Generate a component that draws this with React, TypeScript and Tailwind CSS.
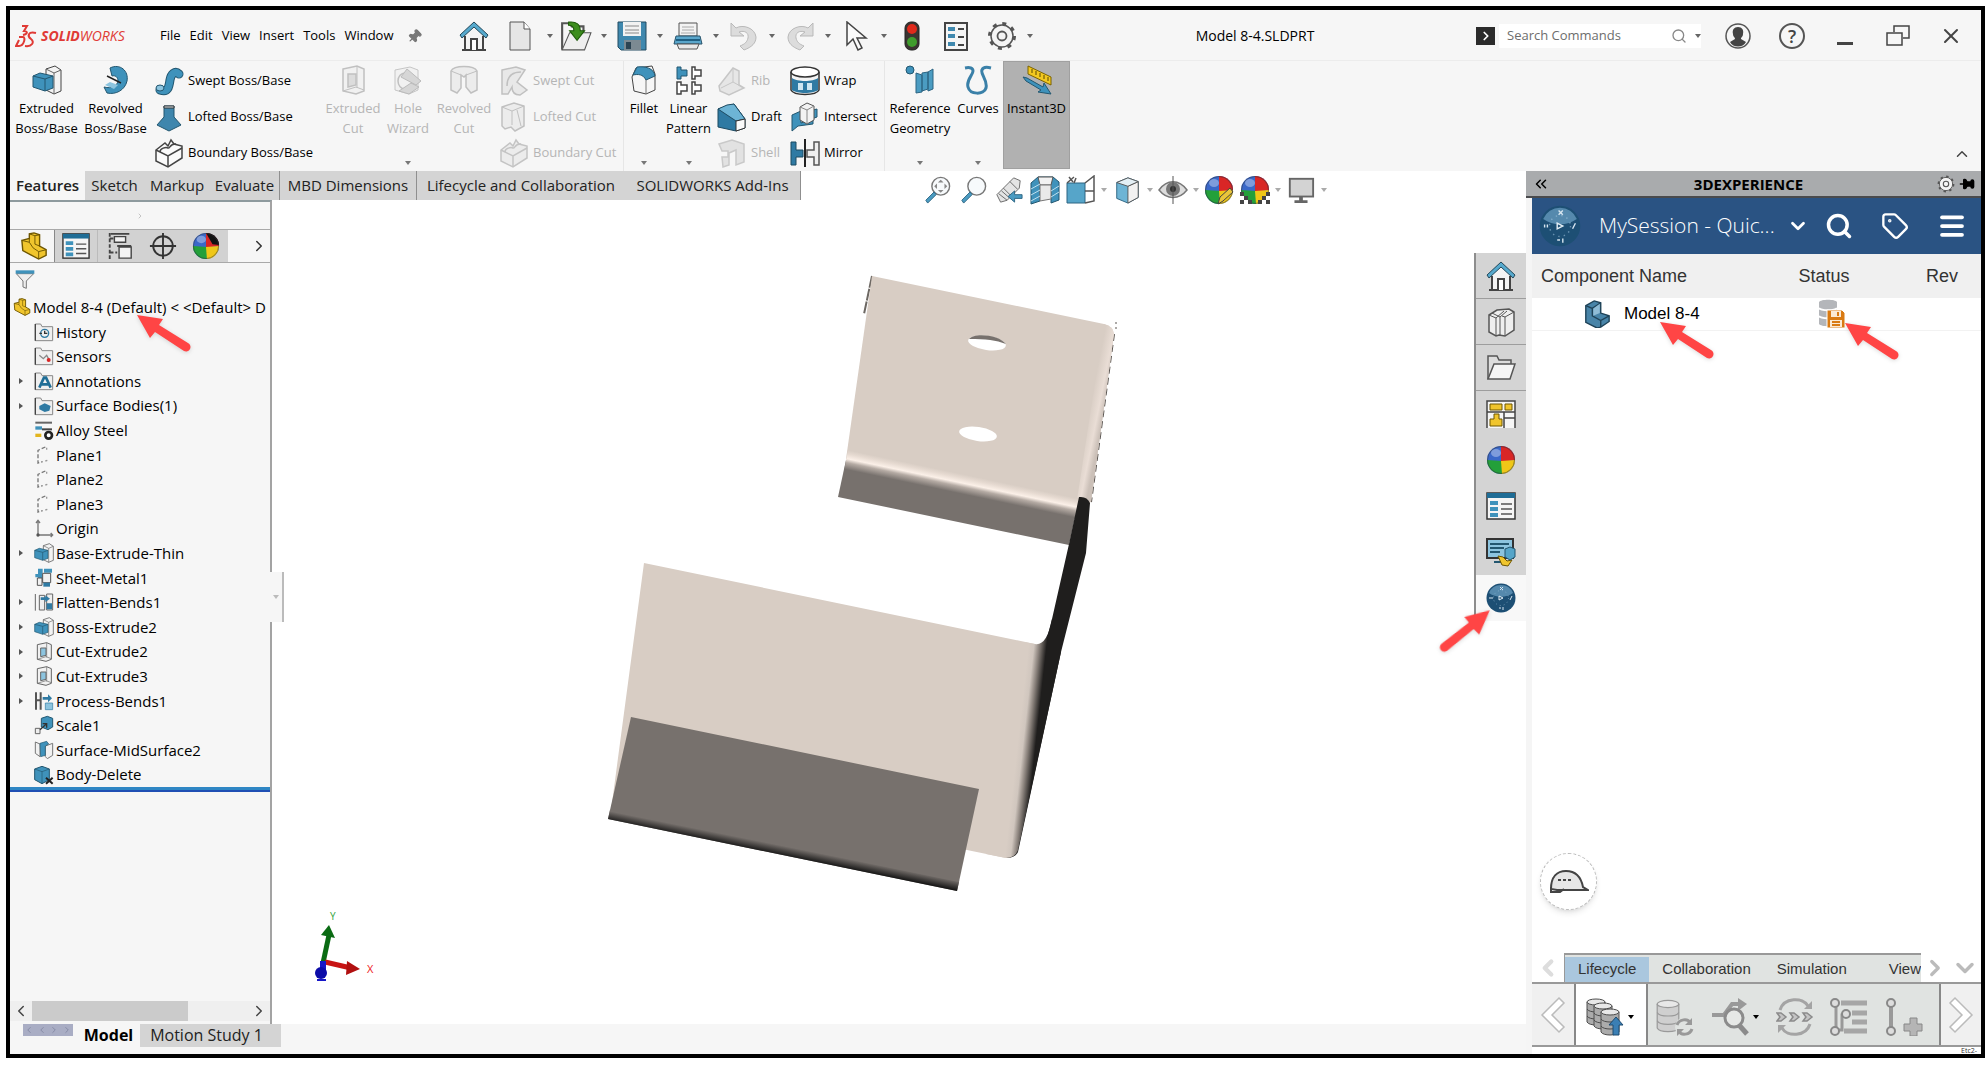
import { useState } from 'react'
import type { ReactNode } from 'react'
import { ChevronDown, ChevronLeft, ChevronRight, ChevronUp, ChevronsLeft, Menu, Pin, Search, Tag, X } from 'lucide-react'

type IcoProps = { size?: number; className?: string; children: ReactNode }

function Ico({ size = 30, className = '', children }: IcoProps) {
  return (
    <svg width={size} height={size} viewBox="0 0 30 30" fill="none" className={`shrink-0 ${className}`} aria-hidden="true">
      {children}
    </svg>
  )
}

const Caret = ({ className = 'text-[#666]' }: { className?: string }) => (
  <svg width="6" height="4" viewBox="0 0 6 4" className={`shrink-0 ${className}`} aria-hidden="true">
    <path d="M0 0h6L3 4z" fill="currentColor" />
  </svg>
)

/* ---------- title bar icons ---------- */

const HomeIcon = ({ size = 30 }: { size?: number }) => (
  <Ico size={size}>
    <path d="M5 14v15h20V14L15 5z" fill="#f4f4f4" />
    <path d="M6 15v14M24 15v14M3 29h24" stroke="#444" strokeWidth="2" />
    <path d="M15 1L1 14l2 3L15 6l12 11 2-3z" fill="#56a9cd" stroke="#23485a" />
    <path d="M12 29V18h6v11" fill="#fff" stroke="#444" strokeWidth="2" />
  </Ico>
)

const NewIcon = () => (
  <Ico>
    <path d="M5 1h14l6 7v21H5z" fill="#e6e6e6" stroke="#555" />
    <path d="M19 1v7h6" fill="#fff" stroke="#555" />
  </Ico>
)

const OpenIcon = () => (
  <Ico size={32}>
    <path d="M2 28V3h7l2 3h11v5" stroke="#555" strokeWidth="2" />
    <path d="M2 28L9 12h20l-6 16z" fill="#eee" stroke="#555" />
    <path d="M8 2c7-1 11 2 11 8h4l-7 9-7-9h4c0-3-2-5-5-5z" fill="#3c8d1d" stroke="#1f5c0c" />
  </Ico>
)

const SaveIcon = () => (
  <Ico>
    <path d="M1 1h28v28H4l-3-3z" fill="#3f88ae" stroke="#234a60" />
    <path d="M6 1h18v14H6z" fill="#f2f2f2" />
    <path d="M8 5h14M8 9h14M8 12h14" stroke="#888" />
    <path d="M7 19h17v10H7z" fill="#7c8a92" />
    <path d="M9 21h5v7H9z" fill="#2b4352" />
  </Ico>
)

const PrintIcon = () => (
  <Ico>
    <path d="M6 15V2h18v13z" fill="#f3f3f3" stroke="#555" />
    <path d="M9 6h12M9 9h12M8 12h14" stroke="#aaa" />
    <path d="M3 15h24l2 8H1z" fill="#5aa6cb" stroke="#28536a" />
    <path d="M3 19h24" stroke="#1f5f82" strokeWidth="2" />
    <path d="M4 23h22l-2 5H6z" fill="#e9e9e9" stroke="#555" />
  </Ico>
)

const UndoIcon = ({ flip = false }: { flip?: boolean }) => (
  <Ico>
    <g transform={flip ? 'matrix(-1 0 0 1 30 0)' : undefined}>
      <path d="M2 2v13h13l-5-4c6-2 10 1 9 6-1 4-3 6-8 8l4 4c8-3 12-7 12-13C26 7 14 3 7 7z" fill="#dcdcdc" stroke="#b9b9b9" />
    </g>
  </Ico>
)

const CursorIcon = () => (
  <Ico>
    <path d="M6 1v23l6-6 5 11 4-2-5-10h9z" fill="#fafafa" stroke="#444" strokeWidth="1.5" />
  </Ico>
)

const TrafficIcon = () => (
  <Ico>
    <rect x="8" y="1" width="14" height="28" rx="6" fill="#3a3431" stroke="#222" />
    <circle cx="15" cy="8" r="5" fill="#e0291b" />
    <circle cx="15" cy="21" r="5" fill="#3f9c2c" />
  </Ico>
)

const ListIcon = () => (
  <Ico>
    <rect x="4" y="2" width="22" height="27" fill="#f5f5f5" stroke="#444" strokeWidth="2" />
    <path d="M7 6h7v4H7zM7 13h7v4H7zM7 21h7v4H7z" fill="#3f88ae" />
    <path d="M17 8h6M17 16h6M17 24h6" stroke="#444" strokeWidth="2" />
  </Ico>
)

const GearIcon = ({ size = 30 }: { size?: number }) => (
  <Ico size={size}>
    <circle cx="15" cy="15" r="11" fill="#f4f4f4" stroke="#555" strokeWidth="1.5" />
    <circle cx="15" cy="15" r="12.5" stroke="#555" strokeWidth="3" strokeDasharray="4 5.8" />
    <circle cx="15" cy="15" r="9.5" fill="#f4f4f4" />
    <circle cx="15" cy="15" r="4.5" stroke="#555" strokeWidth="1.8" />
  </Ico>
)

/* ---------- ribbon icons ---------- */

const ExtrudeIcon = ({ size = 30 }: { size?: number }) => (
  <Ico size={size}>
    <path d="M14 4l9-3 6 4v21l-7 3-8-4z" fill="#f3f3f3" stroke="#444" />
    <path d="M22 8l7-3M22 8v21M14 4l8 4" stroke="#666" />
    <path d="M1 11l7-3 13 3v12l-8 3-12-4z" fill="#3f92bb" stroke="#235770" />
    <path d="M1 11l12 3 8-3M13 14v12" stroke="#235770" />
  </Ico>
)

const RevolveIcon = () => (
  <Ico>
    <path d="M9 3c10-5 19 3 17 13-2 9-11 14-20 12l-3-6c8 2 13-1 14-6 0-4-3-6-6-5z" fill="#3f92bb" stroke="#235770" />
    <path d="M4 20l5-3 8 3-4 4z" fill="#8cc4df" />
    <path d="M6 11l14 7" stroke="#222" strokeWidth="1.5" />
  </Ico>
)

const SweptIcon = () => (
  <Ico>
    <path d="M6 24c8 3 9-3 10-10 1-6 5-10 9-6" stroke="#235770" strokeWidth="9" strokeLinecap="round" />
    <path d="M6 24c8 3 9-3 10-10 1-6 5-10 9-6" stroke="#3f92bb" strokeWidth="7" strokeLinecap="round" />
    <ellipse cx="6" cy="22" rx="4" ry="3" fill="#8cc4df" stroke="#235770" />
  </Ico>
)

const LoftIcon = () => (
  <Ico>
    <path d="M10 4h10v11l7 8-12 6-12-6 7-8z" fill="#3f86ad" stroke="#235770" />
    <path d="M10 4h10v2H10z" fill="#dfe9ee" stroke="#333" />
  </Ico>
)

const BoundaryIcon = ({ muted = false }: { muted?: boolean }) => (
  <Ico>
    <g stroke={muted ? '#c4c4c4' : '#444'} strokeWidth="1.5" fill={muted ? '#ececec' : '#fafafa'}>
      <path d="M2 12l9-7 3 3 3-6 3 4 8 2v12l-14 9-12-6z" />
      <path d="M2 12l12 6 14-8M14 18v11M6 14c0-4 6-5 8-4s2-5 8-4" fill="none" />
    </g>
  </Ico>
)

const CutIcon = ({ size = 30, color = '#dcdcdc', stroke = '#c0c0c0' }: { size?: number; color?: string; stroke?: string }) => (
  <Ico size={size}>
    <path d="M5 4l14-3 7 3v22l-8 3-13-3z" fill="#f1f1f1" stroke={stroke} strokeWidth="1.5" />
    <path d="M19 1v22M5 26l13-4 8 3" stroke={stroke} />
    <path d="M10 9h8v11l-8 2z" fill={color} stroke={stroke} strokeWidth="1.5" />
  </Ico>
)

const HoleIcon = () => (
  <Ico>
    <path d="M2 5l15-3 8 3v20l-9 4-14-4z" fill="#f1f1f1" stroke="#c6c6c6" />
    <ellipse cx="12" cy="16" rx="7" ry="8" stroke="#c0c0c0" strokeWidth="1.5" />
    <path d="M8 12l6-8 14 12-5 4zM6 26l12-8 8 4-10 7z" fill="#d6d6d6" stroke="#bbb" />
  </Ico>
)

const RevCutIcon = () => (
  <Ico>
    <path d="M2 6c3-6 23-6 26 0v19l-6 3-5-6V10l-2 2-3-2v13l-4 5-6-3z" fill="#ececec" stroke="#c0c0c0" strokeWidth="1.5" />
    <path d="M2 6l10 4M28 6l-11 4" stroke="#c0c0c0" />
  </Ico>
)

const SweptCutIcon = () => (
  <Ico>
    <path d="M3 4l14-3 9 3-8 12 10 8-7 5c-6 0-8-4-8-8l-4 7H3z" fill="#e8e8e8" stroke="#c0c0c0" strokeWidth="1.5" />
    <path d="M8 20c0-9 5-14 14-14" stroke="#c0c0c0" strokeWidth="1.5" />
  </Ico>
)

const LoftCutIcon = () => (
  <Ico>
    <path d="M3 5l12-4 10 3v20l-9 5-4-4-6 2-3-3z" fill="#ececec" stroke="#c0c0c0" strokeWidth="1.5" />
    <path d="M3 5l10 4 12-5M13 9v14M18 8l4 16" stroke="#c0c0c0" />
  </Ico>
)

const FilletIcon = () => (
  <Ico>
    <path d="M3 12L7 3l16-2 3 8v16l-9 4-12-3z" fill="#f6f6f6" stroke="#444" />
    <path d="M4 10l4-8c8-1 17 1 18 9l-9 4C14 9 9 9 4 10z" fill="#3f92bb" stroke="#235770" />
    <path d="M17 15v14" stroke="#777" />
  </Ico>
)

const PatternIcon = () => (
  <Ico>
    <path d="M3 2h4v3h6v6H7v3H3z" fill="#3f92bb" stroke="#235770" />
    <g stroke="#444" strokeWidth="1.5" fill="#fff">
      <path d="M18 2h3v3h6v6h-6v3h-3z" />
      <path d="M3 17h4v3h6v6H7v3H3z" />
      <path d="M18 17h3v3h6v6h-6v3h-3z" />
    </g>
  </Ico>
)

const RibIcon = () => (
  <Ico>
    <path d="M2 20L16 2l6 3v14l5 3-15 7-9-4z" fill="#e6e6e6" stroke="#c6c6c6" strokeWidth="1.5" />
    <path d="M16 2v14L4 22M16 16l9 5" stroke="#c6c6c6" />
  </Ico>
)

const DraftIcon = () => (
  <Ico>
    <path d="M1 7l16-5 11 15v9l-9 3-18-4z" fill="#2f7aa3" stroke="#1d4a61" />
    <path d="M1 7l9-4 7-1 11 15-9 2z" fill="#6db4d5" stroke="#1d4a61" />
    <path d="M19 19l9-2v9l-9 3z" fill="#fafafa" stroke="#333" />
  </Ico>
)

const ShellIcon = () => (
  <Ico>
    <path d="M2 6l13-4 12 4v18l-8 3V12l-7 3v12l-6 2-1-10h6v-6H5z" fill="#e2e2e2" stroke="#c9c9c9" strokeWidth="1.5" />
  </Ico>
)

const WrapIcon = () => (
  <Ico>
    <path d="M1 6v18c3 6 25 6 28 0V6" fill="#f3f3f3" stroke="#333" strokeWidth="1.5" />
    <ellipse cx="15" cy="6" rx="14" ry="5" fill="#fff" stroke="#333" strokeWidth="1.5" />
    <path d="M2 12c5 4 21 4 26 0v12c-5 4-21 4-26 0z" fill="#2f7aa3" />
    <path d="M8 17h5v7H8zM17 17h5v7h-5z" fill="#cfe6f1" />
  </Ico>
)

const IntersectIcon = () => (
  <Ico>
    <path d="M2 13l9-4v12l16-6V7l-4 1v14L8 24l-6 5z" fill="#3f92bb" stroke="#235770" />
    <path d="M10 5l7-4 7 3v14l-7 4-7-4z" fill="#f3f3f3" stroke="#555" />
    <path d="M10 5l7 3 7-4M17 8v14" stroke="#888" />
  </Ico>
)

const MirrorIcon = () => (
  <Ico>
    <path d="M1 4h5v8h7v7H6v8H1z" fill="#2f7aa3" stroke="#1d4a61" />
    <path d="M15 1v28" stroke="#222" strokeWidth="2" />
    <path d="M29 4h-5v8h-7v7h7v8h5z" fill="#eee" stroke="#555" strokeWidth="1.5" />
  </Ico>
)

const RefGeoIcon = () => (
  <Ico>
    <circle cx="5" cy="5" r="4" fill="#3f92bb" stroke="#235770" />
    <path d="M11 8l6 2v17l-6 1zM17 8l6-1v17l-6 2zM23 7l5-3v20l-5 2z" fill="#4b9cc2" stroke="#2c6482" />
  </Ico>
)

const CurvesIcon = () => (
  <Ico>
    <path d="M2 3c5-1 8 0 8 3 0 4-7 9-5 16 2 8 16 8 18 1 2-8-6-14-4-18 1-3 5-3 9-2" stroke="#3a80a8" strokeWidth="3" />
  </Ico>
)

const InstantIcon = () => (
  <Ico>
    <path d="M6 1l23 11v8L6 9z" fill="#f3c81f" stroke="#7b6200" />
    <path d="M10 4v4M14 6v4M18 8v4M22 10v4M26 12v4" stroke="#5b4800" />
    <path d="M1 12l4 1 16 9 1-4 7 11-13-2 3-2-15-9z" fill="#3f92bb" stroke="#235770" />
  </Ico>
)

/* ---------- view toolbar icons ---------- */

const MagnifyIcon = ({ fit = false }: { fit?: boolean }) => (
  <Ico size={28}>
    <circle cx="19" cy="11" r="9.5" fill="#f7fafc" stroke="#777" strokeWidth="1.5" />
    <path d="M12 17l-9 9 2 3 9-9z" fill="#4b9cc2" stroke="#2c6482" />
    {fit && <path d="M19 4l3 3h-6zM19 18l3-3h-6zM12 11l3-3v6zM26 11l-3-3v6z" fill="#888" />}
  </Ico>
)

const PrevViewIcon = () => (
  <Ico size={28}>
    <path d="M2 20L20 2l7 3-1 8-13 13-7 2z" fill="#e4e4e4" stroke="#666" />
    <path d="M16 6l8 8M9 13l8 8M4 19l9 7M7 16l8 7" stroke="#666" />
    <path d="M29 20h-8v-4l-7 6 7 6v-4h8z" fill="#4b9cc2" stroke="#2c6482" />
  </Ico>
)

const SectionIcon = () => (
  <Ico size={30}>
    <path d="M1 8L8 2h15l6 5v18l-8 3V12H10v14l-9 3z" fill="#3f92bb" stroke="#235770" />
    <path d="M8 2h15l-2 8H10z" fill="#f2f2f2" stroke="#555" />
    <path d="M10 10h11v14l-11 2z" fill="#e9e9e9" stroke="#777" />
    <path d="M1 14l9-5M1 20l9-5M1 26l9-5M21 16l8-5M21 22l8-5" stroke="#bfe0ef" />
  </Ico>
)

const OrientIcon = () => (
  <Ico size={30}>
    <path d="M1 8h18v20H1z" fill="#56a5c9" stroke="#2c6482" />
    <path d="M1 8l7-6M19 8l9-7v25l-9 2M3 2l4 5M10 3l-2 5M19 16h9" stroke="#555" strokeWidth="1.5" />
  </Ico>
)

const CubeIcon = ({ size = 28 }: { size?: number }) => (
  <Ico size={size}>
    <path d="M4 7l12-5 11 4v17l-11 6-12-5z" fill="#6db4d5" stroke="#2c6482" />
    <path d="M16 11l11-5v17l-11 6z" fill="#f2f2f2" stroke="#555" />
    <path d="M4 7l12-5 11 4-11 5z" fill="#e4f0f6" stroke="#555" />
  </Ico>
)

const EyeIcon = () => (
  <Ico size={30}>
    <path d="M1 15c8-11 20-11 28 0-8 10-20 10-28 0z" fill="#ddd" stroke="#777" strokeWidth="1.5" />
    <circle cx="15" cy="14" r="7" fill="#777" />
    <circle cx="15" cy="14" r="3" fill="#333" />
    <path d="M15 1v28" stroke="#555" />
  </Ico>
)

const SphereIcon = ({ size = 28, mode = '' }: { size?: number; mode?: string }) => (
  <Ico size={size}>
    <circle cx="15" cy="15" r="14" fill="#3a68c9" />
    <path d="M15 1a14 14 0 0 1 14 14L15 17z" fill="#d92626" />
    <path d="M1 15a14 14 0 0 0 15 14V16z" fill="#23a03a" />
    <path d="M29 15a14 14 0 0 1-13 14l-1-13z" fill="#efc718" />
    {mode === 'dark' && <path d="M15 1c9 0 14 7 14 13l-7-1z" fill="#111" />}
    <circle cx="15" cy="15" r="13.5" stroke="#333" strokeOpacity=".5" />
    <ellipse cx="10" cy="8" rx="5" ry="4" fill="#fff" fillOpacity=".35" />
    {mode === 'pencil' && <path d="M14 29l2-7 10-9 3 4-10 9z" fill="#e9c53c" stroke="#444" />}
    {mode === 'scene' && (
      <>
        <path d="M0 17h4v4H0zM4 21h4v4H4zM0 25h4v4H0zM22 21h4v4h-4zM26 17h4v4h-4zM26 25h4v4h-4zM8 25h4v4H8zM18 25h4v4h-4z" fill="#444" />
        <path d="M0 21h4v4H0zM4 25h4v4H4zM22 25h4v4h-4zM26 21h4v4h-4z" fill="#fff" />
      </>
    )}
  </Ico>
)

const MonitorIcon = () => (
  <Ico size={28}>
    <rect x="3" y="3" width="25" height="19" fill="#d3d3d3" stroke="#666" strokeWidth="2" />
    <path d="M13 22h4v4h5v3H8v-3h5z" fill="#666" />
  </Ico>
)

/* ---------- feature tree icons ---------- */

const PartIcon = ({ size = 28, fill = '#f0c52d', stroke = '#6e5600' }: { size?: number; fill?: string; stroke?: string }) => (
  <Ico size={size}>
    <path d="M2 9l8-2V2l5-1 6 2v12l7 4v6l-8 4L3 20z" fill={fill} stroke={stroke} strokeWidth="1.5" />
    <path d="M10 2l6 2 5-1M16 4v9l5 2M10 7v4l4 6 6 4 8-2M20 21v8M2 9l8 2" stroke={stroke} />
  </Ico>
)

const SeatIcon = () => (
  <Ico size={28}>
    <path d="M3 6l9-5 7 2v11l9 3v6l-9 6-4 1L3 24z" fill="#4884a8" stroke="#1f4358" strokeWidth="1.5" />
    <path d="M3 6l7 3 9-6M10 9v8l9 5 9-5M19 22v7" stroke="#1f4358" strokeWidth="1.5" />
    <path d="M11 9l7-5v10l-7 3z" fill="#8fbcd6" />
  </Ico>
)

const PropsIcon = ({ size = 28 }: { size?: number }) => (
  <Ico size={size}>
    <rect x="1" y="2" width="28" height="26" fill="#f5f5f5" stroke="#333" strokeWidth="1.5" />
    <path d="M1 2h28v5H1z" fill="#1f6d96" />
    <path d="M4 10h8v4H4zM4 16h8v4H4zM4 22h8v4H4z" fill="#3f92bb" />
    <path d="M15 13h11M15 18h11M15 23h11" stroke="#555" strokeWidth="1.5" />
  </Ico>
)

const ConfigIcon = () => (
  <Ico size={28}>
    <path d="M4 1v28M4 7h6M4 22h8" stroke="#444" strokeWidth="2" strokeDasharray="4 2" />
    <path d="M9 5h12v6H9zM14 16h13v12H14z" fill="#f3f3f3" stroke="#444" strokeWidth="1.5" />
    <path d="M5 2h20M12 15h15" stroke="#444" strokeWidth="2" />
  </Ico>
)

const TargetIcon = () => (
  <Ico size={28}>
    <circle cx="15" cy="15" r="10.5" stroke="#333" strokeWidth="2" />
    <path d="M15 1v28M1 15h28" stroke="#333" strokeWidth="2" />
  </Ico>
)

const FolderIcon = ({ children }: { children?: ReactNode }) => (
  <Ico size={20}>
    <path d="M2 28V3h8l2 4h16v21z" fill="#efefef" stroke="#888" strokeWidth="1.5" />
    <path d="M2 28V3" stroke="#444" strokeWidth="2" />
    {children}
  </Ico>
)

const PlaneIcon = () => (
  <Ico size={20}>
    <path d="M17 3L6 8v19l7-2" stroke="#777" strokeWidth="2" strokeDasharray="6 3" />
    <path d="M19 4v3M17 24l3-1" stroke="#999" strokeWidth="2" />
  </Ico>
)

const OriginIcon = () => (
  <Ico size={20}>
    <path d="M6 4v20h22M3 6l3-4 3 4M25 21l3 3-3 3" stroke="#777" strokeWidth="2" />
    <circle cx="6" cy="24" r="2.5" fill="#555" />
  </Ico>
)

const SteelIcon = () => (
  <Ico size={20}>
    <path d="M2 4h25" stroke="#666" strokeWidth="3" />
    <path d="M2 12h10" stroke="#3f92bb" strokeWidth="5" />
    <path d="M12 14h15" stroke="#444" strokeWidth="3" />
    <path d="M2 23h9" stroke="#e3b51e" strokeWidth="5" />
    <circle cx="22" cy="23" r="5" fill="#fff" stroke="#222" strokeWidth="4" />
  </Ico>
)

const SheetIcon = () => (
  <Ico size={20}>
    <path d="M6 1h7v14H6zM15 1h12v6H15zM2 9h4v5H2z" fill="#3f92bb" />
    <path d="M5 15h7v11H5zM13 8h12v14H13z" fill="#f1f1f1" stroke="#555" strokeWidth="1.5" />
    <path d="M14 22h10v6H14z" fill="#2f7aa3" />
  </Ico>
)

const FlattenIcon = () => (
  <Ico size={20}>
    <path d="M2 3v25M8 5h8v22H8zM19 3h9v24h-9z" fill="#eee" stroke="#666" strokeWidth="1.5" />
    <path d="M10 8h7V5l7 5-7 5v-3h-7zM19 17h8v9h-8z" fill="#2f7aa3" />
  </Ico>
)

const ProcessIcon = () => (
  <Ico size={20}>
    <path d="M3 2v26M10 2v26M3 14h7" stroke="#555" strokeWidth="3" />
    <path d="M13 9h8V5l6 6-6 6v-4h-8z" fill="#2f7aa3" />
    <path d="M17 18h11v10H17z" fill="#8cc4df" stroke="#2f7aa3" />
  </Ico>
)

const ScaleIcon = () => (
  <Ico size={20}>
    <path d="M11 5l9-3 8 3v13l-7 4-10-4z" fill="#3f92bb" stroke="#235770" strokeWidth="1.5" />
    <path d="M2 20h7v8H2z" fill="#eee" stroke="#666" strokeWidth="1.5" />
    <path d="M9 22l9-8M13 13h6v6" stroke="#333" strokeWidth="2" />
  </Ico>
)

const MidSurfaceIcon = () => (
  <Ico size={20}>
    <path d="M2 3v17l7 5V6zM17 9l11-4v18l-8 5-3-3z" fill="#f1f1f1" stroke="#777" strokeWidth="1.5" />
    <path d="M9 5l10-3 3 4-5 3v14l-7 2z" fill="#3f92bb" stroke="#235770" />
  </Ico>
)

const DeleteBodyIcon = () => (
  <Ico size={20}>
    <path d="M1 6l11-4 11 4v16l-11 6L1 22z" fill="#3f92bb" stroke="#235770" strokeWidth="1.5" />
    <path d="M1 6l11 4 11-4M12 10v18" stroke="#235770" />
    <path d="M18 19l10 9M28 19l-10 9" stroke="#222" strokeWidth="3" />
  </Ico>
)

/* ---------- task pane icons ---------- */

const BooksIcon = () => (
  <Ico>
    <path d="M3 8l8-5 12-1 5 3v18l-9 6-6-1-3 1-7-4z" fill="#eee" stroke="#555" strokeWidth="1.5" />
    <path d="M3 8l7 3v18M10 11l8-7M10 8l4 2v18M14 10l7-6M16 9l3 1v19M19 10l9-5M6 6l4 2" stroke="#555" />
  </Ico>
)

const FolderOpenIcon = () => (
  <Ico>
    <path d="M2 26V3h9l2 4h12v4" fill="#ddd" stroke="#555" strokeWidth="1.5" />
    <path d="M2 26L8 11h21l-5 15z" fill="#f6f6f6" stroke="#555" strokeWidth="1.5" />
  </Ico>
)

const PaletteIcon = () => (
  <Ico>
    <path d="M1 29V2h28v27M1 13h28M18 13v16M18 19h11" fill="#f6f6f6" stroke="#444" strokeWidth="1.5" />
    <path d="M4 5h12v6H4zM19 5h7v6h-7zM8 15h5v5h3v7H4v-7h4z" fill="#f0c52d" stroke="#6e5600" />
  </Ico>
)

const ForumIcon = () => (
  <Ico>
    <rect x="1" y="2" width="26" height="19" fill="#8cc4df" stroke="#333" strokeWidth="2" />
    <path d="M4 7h19M4 11h14M4 15h10M8 25h10" stroke="#235770" strokeWidth="2" />
    <path d="M12 19l5 1 4 4 5-1-4 6-6-1z" fill="#f0c52d" stroke="#6e5600" />
    <path d="M19 12l5-2 5 2v8l-5 3-5-3z" fill="#56a5c9" stroke="#235770" />
  </Ico>
)

const CompassIcon = ({ size = 30 }: { size?: number }) => (
  <Ico size={size}>
    <circle cx="15" cy="15" r="14.5" fill="#1d4f74" />
    <path d="M3 10a13 13 0 0 1 24 0c-7 5-17 5-24 0z" fill="#6ea3c6" fillOpacity=".7" />
    <circle cx="15" cy="15" r="7.5" stroke="#9cc1da" strokeOpacity=".6" strokeDasharray="1 3" />
    <path d="M13 13l4 2-4 2z" stroke="#e3eef5" />
    <path d="M4 14v2M6 14v2M26 13l-2 4M14 4l3 3M17 4l-3 3M13 25h2M17 24v3" stroke="#d7e6f0" />
  </Ico>
)

/* ---------- lifecycle action icons ---------- */

const Cylinder = ({ x, y, dark = false }: { x: number; y: number; dark?: boolean }) => (
  <g transform={`translate(${x} ${y})`} stroke={dark ? '#4c4c4c' : '#999'} fill={dark ? '#ababab' : '#cfcfcf'}>
    <path d="M0 3v20c2 4 16 4 18 0V3" />
    <ellipse cx="9" cy="3" rx="9" ry="3" fill="#e8e8e8" />
    <path d="M0 10c2 4 16 4 18 0M0 17c2 4 16 4 18 0" fill="none" />
  </g>
)

const SaveActiveIcon = () => (
  <svg width="38" height="38" viewBox="0 0 38 38" aria-hidden="true">
    <Cylinder x={1} y={1} dark />
    <Cylinder x={8} y={5} dark />
    <Cylinder x={15} y={11} dark />
    <path d="M30 19l7 8h-4v10h-6V27h-4z" fill="#3b7fb4" stroke="#1f4c70" />
  </svg>
)

const ReloadIcon = () => (
  <svg width="38" height="38" viewBox="0 0 38 38" fill="none" aria-hidden="true">
    <g transform="scale(1.2)"><Cylinder x={1} y={2} /></g>
    <circle cx="29" cy="29" r="10" fill="#e0e3e1" />
    <path d="M21 27c2-6 11-7 13-2M36 31c-2 6-11 7-13 2" stroke="#999" strokeWidth="3" />
    <path d="M36 20v7h-7zM21 38v-7h7z" fill="#999" />
  </svg>
)

const ExploreIcon = () => (
  <svg width="38" height="38" viewBox="0 0 38 38" fill="none" aria-hidden="true">
    <path d="M1 17h12l8-11h8" stroke="#999" strokeWidth="4" />
    <path d="M27 0l9 6-9 7z" fill="#999" />
    <circle cx="23" cy="20" r="9" fill="#e6e8e6" stroke="#8b8b8b" strokeWidth="3" />
    <path d="M28 27l8 9" stroke="#8b8b8b" strokeWidth="5" />
  </svg>
)

const UpdateIcon = () => (
  <svg width="38" height="38" viewBox="0 0 38 38" fill="none" aria-hidden="true">
    <path d="M4 12C8-1 27-1 32 8M34 26C30 39 11 39 6 30" stroke="#a4a4a4" strokeWidth="3" />
    <path d="M36 3v8h-8zM2 35v-8h8z" fill="#a4a4a4" />
    <path d="M1 15h4l5 4-5 4H1l3-4zM14 15h4l5 4-5 4h-4l3-4zM27 15h4l5 4-5 4h-4l3-4z" fill="#c4c4c4" stroke="#8b8b8b" strokeWidth="1.5" />
  </svg>
)

const StructureIcon = () => (
  <svg width="38" height="38" viewBox="0 0 38 38" fill="none" aria-hidden="true">
    <path d="M6 6v26M6 32h6V17h4" stroke="#999" strokeWidth="3" />
    <path d="M11 5h26M22 15h15M22 24h15M14 33h23" stroke="#a6a6a6" strokeWidth="5" />
    <circle cx="5" cy="5" r="4" fill="#ddd" stroke="#888" strokeWidth="2" />
    <circle cx="16" cy="16" r="4" fill="#ddd" stroke="#888" strokeWidth="2" />
    <circle cx="5" cy="33" r="4" fill="#ddd" stroke="#888" strokeWidth="2" />
  </svg>
)

const AddBranchIcon = () => (
  <svg width="38" height="38" viewBox="0 0 38 38" fill="none" aria-hidden="true">
    <path d="M6 6v26" stroke="#999" strokeWidth="4" />
    <circle cx="6" cy="5" r="4" fill="#ddd" stroke="#888" strokeWidth="2" />
    <circle cx="6" cy="33" r="4" fill="#ddd" stroke="#888" strokeWidth="2" />
    <path d="M25 20h7v6h5v7h-5v5h-7v-5h-6v-7h6z" fill="#b5b5b5" stroke="#888" />
  </svg>
)

const SaveStateIcon = () => (
  <svg width="28" height="30" viewBox="0 0 28 30" fill="none" aria-hidden="true">
    <path d="M1 3c2-3 16-3 18 0v22c-2 3-16 3-18 0z" fill="#b4b6ba" />
    <path d="M1 9c2 3 16 3 18 0M1 17c2 3 16 3 18 0" stroke="#fff" strokeWidth="2" />
    <path d="M9 11h15l3 3v15H9z" fill="#d97a12" stroke="#fff" />
    <path d="M13 12h10v6H13zM12 21h12v7H12z" fill="#fbe9d3" />
    <path d="M20 13v4M14 23h8M14 26h8" stroke="#d97a12" strokeWidth="2" />
  </svg>
)

/* Callout arrow, tip in the top left corner */
const Callout = ({ className }: { className: string }) => (
  <svg width="54" height="40" viewBox="0 0 54 40" aria-hidden="true" className={`pointer-events-none absolute z-10 drop-shadow-sm ${className}`}>
    <path d="M0 0L26 4l-4 6 29 18a4 4 0 0 1-4 8L18 17l-5 6z" fill="#ff4545" />
  </svg>
)

/* ---------- data ---------- */

const menus = ['File', 'Edit', 'View', 'Insert', 'Tools', 'Window']

const quickTools = [
  { label: 'Home', icon: <HomeIcon />, width: 'w-[54px]' },
  { label: 'New', icon: <NewIcon />, width: 'w-[38px]', caret: 'w-[21px]' },
  { label: 'Open', icon: <OpenIcon />, width: 'w-8', caret: 'w-6' },
  { label: 'Save', icon: <SaveIcon />, width: 'w-8', caret: 'w-6' },
  { label: 'Print', icon: <PrintIcon />, width: 'w-8', caret: 'w-6' },
  { label: 'Undo', icon: <UndoIcon />, width: 'w-8', caret: 'w-6' },
  { label: 'Redo', icon: <UndoIcon flip />, width: 'w-8', caret: 'w-6' },
  { label: 'Select', icon: <CursorIcon />, width: 'w-8', caret: 'w-6' },
]

const commandTabs = [
  { label: 'Features', width: 'w-[75px]' },
  { label: 'Sketch', width: 'w-[59px]' },
  { label: 'Markup', width: 'w-[66px]' },
  { label: 'Evaluate', width: 'w-[70px]', line: true },
  { label: 'MBD Dimensions', width: 'w-[137px]', line: true },
  { label: 'Lifecycle and Collaboration', width: 'w-[208px]' },
  { label: 'SOLIDWORKS Add-Ins', width: 'w-[176px]', line: true },
]

const viewTools = [
  { label: 'Zoom to Fit', icon: <MagnifyIcon fit /> },
  { label: 'Zoom to Area', icon: <MagnifyIcon /> },
  { label: 'Previous View', icon: <PrevViewIcon /> },
  { label: 'Section View', icon: <SectionIcon /> },
  { label: 'View Orientation', icon: <OrientIcon />, caret: true },
  { label: 'Display Style', icon: <CubeIcon />, caret: true },
  { label: 'Hide/Show Items', icon: <EyeIcon />, caret: true },
  { label: 'Edit Appearance', icon: <SphereIcon size={30} mode="pencil" /> },
  { label: 'Apply Scene', icon: <SphereIcon size={30} mode="scene" />, caret: true },
  { label: 'View Settings', icon: <MonitorIcon />, caret: true },
]

const treeItems = [
  { label: 'History', icon: <FolderIcon><circle cx="16" cy="17" r="6" stroke="#2f7aa3" strokeWidth="2" /><path d="M16 13v4h4M8 17h4" stroke="#333" strokeWidth="2" /></FolderIcon> },
  { label: 'Sensors', icon: <FolderIcon><path d="M8 14l6 5 5-5 4 7" stroke="#888" strokeWidth="2" /><circle cx="22" cy="21" r="3" fill="#d92626" /></FolderIcon> },
  { label: 'Annotations', open: true, icon: <FolderIcon><path d="M8 25l7-15h3l7 15M11 20h11" stroke="#1f6d96" strokeWidth="4" /></FolderIcon> },
  { label: 'Surface Bodies(1)', open: true, icon: <FolderIcon><path d="M8 15l8-4 9 4-2 7-7 2-8-4z" fill="#2f7aa3" /></FolderIcon> },
  { label: 'Alloy Steel', icon: <SteelIcon /> },
  { label: 'Plane1', icon: <PlaneIcon /> },
  { label: 'Plane2', icon: <PlaneIcon /> },
  { label: 'Plane3', icon: <PlaneIcon /> },
  { label: 'Origin', icon: <OriginIcon /> },
  { label: 'Base-Extrude-Thin', open: true, icon: <ExtrudeIcon size={20} /> },
  { label: 'Sheet-Metal1', icon: <SheetIcon /> },
  { label: 'Flatten-Bends1', open: true, icon: <FlattenIcon /> },
  { label: 'Boss-Extrude2', open: true, icon: <ExtrudeIcon size={20} /> },
  { label: 'Cut-Extrude2', open: true, icon: <CutIcon size={20} color="#8cc4df" stroke="#666" /> },
  { label: 'Cut-Extrude3', open: true, icon: <CutIcon size={20} color="#8cc4df" stroke="#666" /> },
  { label: 'Process-Bends1', open: true, icon: <ProcessIcon /> },
  { label: 'Scale1', icon: <ScaleIcon /> },
  { label: 'Surface-MidSurface2', icon: <MidSurfaceIcon /> },
  { label: 'Body-Delete', icon: <DeleteBodyIcon /> },
]

const paneTabs = [
  { label: 'SOLIDWORKS Resources', icon: <HomeIcon size={30} /> },
  { label: 'Design Library', icon: <BooksIcon /> },
  { label: 'File Explorer', icon: <FolderOpenIcon /> },
  { label: 'View Palette', icon: <PaletteIcon /> },
  { label: 'Appearances', icon: <SphereIcon size={30} /> },
  { label: 'Custom Properties', icon: <PropsIcon size={30} /> },
  { label: 'Forum', icon: <ForumIcon /> },
  { label: '3DEXPERIENCE', icon: <CompassIcon /> },
]

/* ---------- ribbon parts ---------- */

type BigProps = { lines: string[]; icon: ReactNode; width: string; muted?: boolean; caret?: boolean; active?: boolean }

function BigButton({ lines, icon, width, muted, caret, active }: BigProps) {
  return (
    <button
      disabled={muted}
      className={`flex flex-col items-center pt-1 pb-[6px] text-[13px] leading-5 whitespace-nowrap ${width} ${
        muted ? 'text-[#b5b5b5]' : 'text-black'
      } ${active ? 'bg-[#b1b1b1] outline outline-[#a0a0a0] -outline-offset-1' : ''}`}
    >
      {icon}
      <span className="mt-[3px]">
        {lines.map((line) => (
          <span key={line} className="block">{line}</span>
        ))}
      </span>
      {caret && <Caret className="mt-auto text-[#777]" />}
    </button>
  )
}

function SmallStack({ items, className }: { items: { label: string; icon: ReactNode; muted?: boolean }[]; className: string }) {
  return (
    <div className={`flex flex-col pt-[2px] ${className}`}>
      {items.map((item) => (
        <button
          key={item.label}
          disabled={item.muted}
          className={`flex h-9 items-center gap-1 text-[13px] whitespace-nowrap ${item.muted ? 'text-[#b5b5b5]' : 'text-black'}`}
        >
          {item.icon}
          {item.label}
        </button>
      ))}
    </div>
  )
}

function TitleBar() {
  return (
    <header className="flex h-[51px] items-center border-b border-[#ececec] bg-[#f6f6f6] pt-[2px]">
      <div className="flex w-[142px] items-center gap-1 pl-[5px] text-[#e03a35]">
        <svg width="22" height="24" viewBox="0 0 22 24" fill="none" stroke="currentColor" strokeWidth="2" aria-label="3DS">
          <path d="M7 2h5l-3 5c4 0 4 3-1 4" />
          <path d="M4 13h4c3 0 1 9-4 9H1l3-6" />
          <path d="M21 9c-8-2-9 3-5 6s1 8-6 7" />
        </svg>
        <span className="text-sm font-bold italic">SOLID<span className="font-normal">WORKS</span></span>
      </div>
      <nav className="flex w-[295px] items-center gap-[9px] pl-2 text-[13px]">
        {menus.map((menu) => (
          <button key={menu}>{menu}</button>
        ))}
        <Pin size={15} className="ml-1 rotate-45 fill-[#777] text-[#777]" />
      </nav>
      <div className="flex items-center">
        {quickTools.map((tool) => (
          <div key={tool.label} className="flex items-center">
            <button aria-label={tool.label} className={`flex justify-center ${tool.width}`}>{tool.icon}</button>
            {tool.caret && (
              <button aria-label={`${tool.label} options`} className={`flex justify-center ${tool.caret}`}><Caret /></button>
            )}
          </div>
        ))}
        <button aria-label="Rebuild" className="flex w-8 justify-center"><TrafficIcon /></button>
        <button aria-label="File Properties" className="ml-3 flex w-8 justify-center"><ListIcon /></button>
        <button aria-label="Options" className="ml-[14px] flex w-8 justify-center"><GearIcon /></button>
        <button aria-label="Options menu" className="flex w-6 justify-center"><Caret /></button>
      </div>
      <h1 className="flex-1 pr-2 text-center text-sm">Model 8-4.SLDPRT</h1>
      <div className="flex items-center">
        <span className="mr-1 flex h-[18px] w-[19px] items-center justify-center bg-[#2b2b2b] text-white"><ChevronRight size={14} strokeWidth={3} /></span>
        <label className="flex h-6 items-center bg-white">
          <input aria-label="Search Commands" placeholder="Search Commands" className="w-[172px] bg-transparent pl-2 text-[13px] outline-none placeholder:text-[#6d6d6d]" />
          <Search size={16} className="mr-2 text-[#888]" />
          <Caret />
        </label>
      </div>
      <div className="flex items-center gap-7 pr-[18px] pl-6 text-[#444]">
        <button aria-label="Account">
          <svg width="26" height="26" viewBox="0 0 26 26" fill="none">
            <circle cx="13" cy="13" r="12" stroke="#555" strokeWidth="1.5" />
            <path d="M13 4c4 0 6 3 5 7 0 3-2 3-2 5l5 3c-3 6-13 6-16 0l5-3c0-2-2-2-2-5-1-4 1-7 5-7z" fill="#444" />
          </svg>
        </button>
        <button aria-label="Help" className="flex h-[26px] w-[26px] items-center justify-center rounded-full border-2 border-[#555] text-[18px] font-semibold">?</button>
        <button aria-label="Minimize" className="flex h-6 w-6 items-end justify-center pb-[3px]"><span className="h-[3px] w-4 bg-[#444]" /></button>
        <button aria-label="Restore">
          <svg width="26" height="24" viewBox="0 0 26 24" fill="none" stroke="#444" strokeWidth="1.5">
            <path d="M9 8V2h15v12h-6" />
            <rect x="2" y="9" width="15" height="12" />
          </svg>
        </button>
        <button aria-label="Close"><X size={24} strokeWidth={2} /></button>
      </div>
    </header>
  )
}

function Ribbon() {
  return (
    <section className="flex h-[110px] bg-[#f6f6f6] pl-[2px]">
      <BigButton lines={['Extruded', 'Boss/Base']} icon={<ExtrudeIcon />} width="w-[69px]" />
      <BigButton lines={['Revolved', 'Boss/Base']} icon={<RevolveIcon />} width="w-[69px]" />
      <SmallStack
        className="w-[175px] pl-1"
        items={[
          { label: 'Swept Boss/Base', icon: <SweptIcon /> },
          { label: 'Lofted Boss/Base', icon: <LoftIcon /> },
          { label: 'Boundary Boss/Base', icon: <BoundaryIcon /> },
        ]}
      />
      <BigButton lines={['Extruded', 'Cut']} icon={<CutIcon />} width="w-[56px]" muted />
      <BigButton lines={['Hole', 'Wizard']} icon={<HoleIcon />} width="w-[54px]" muted caret />
      <BigButton lines={['Revolved', 'Cut']} icon={<RevCutIcon />} width="w-[58px]" muted />
      <SmallStack
        className="w-[131px] border-r border-[#e6e6e6] pl-[6px]"
        items={[
          { label: 'Swept Cut', icon: <SweptCutIcon />, muted: true },
          { label: 'Lofted Cut', icon: <LoftCutIcon />, muted: true },
          { label: 'Boundary Cut', icon: <BoundaryIcon muted />, muted: true },
        ]}
      />
      <BigButton lines={['Fillet']} icon={<FilletIcon />} width="w-[40px]" caret />
      <BigButton lines={['Linear', 'Pattern']} icon={<PatternIcon />} width="w-[49px]" caret />
      <SmallStack
        className="w-[75px] pl-1"
        items={[
          { label: 'Rib', icon: <RibIcon />, muted: true },
          { label: 'Draft', icon: <DraftIcon /> },
          { label: 'Shell', icon: <ShellIcon />, muted: true },
        ]}
      />
      <SmallStack
        className="w-[97px] border-r border-[#e6e6e6] pl-[2px]"
        items={[
          { label: 'Wrap', icon: <WrapIcon /> },
          { label: 'Intersect', icon: <IntersectIcon /> },
          { label: 'Mirror', icon: <MirrorIcon /> },
        ]}
      />
      <BigButton lines={['Reference', 'Geometry']} icon={<RefGeoIcon />} width="w-[70px]" caret />
      <BigButton lines={['Curves']} icon={<CurvesIcon />} width="w-[46px]" caret />
      <BigButton lines={['Instant3D']} icon={<InstantIcon />} width="mb-[2px] ml-[2px] w-[67px]" active />
      <button aria-label="Collapse ribbon" className="mt-auto mr-[10px] mb-2 ml-auto text-[#444]"><ChevronUp size={18} /></button>
    </section>
  )
}

function FeaturePanel() {
  return (
    <aside className="flex w-[262px] flex-col border-t-2 border-r-2 border-t-[#8e9a9e] border-r-[#a3a3a3] bg-[#f6f6f6]">
      <div className="flex h-[27px] items-center justify-center text-[#aaa]"><ChevronRight size={8} /></div>
      <div className="flex h-[34px] border-y border-[#a9a9a9] bg-[#f6f6f6]">
        <button aria-label="FeatureManager" className="flex w-[45px] items-center justify-center border-r border-[#888] pl-1"><PartIcon /></button>
        <button aria-label="PropertyManager" className="flex w-[43px] items-center justify-center border-r border-[#bbb] bg-[#d2d2d2]"><PropsIcon /></button>
        <button aria-label="ConfigurationManager" className="flex w-[43px] items-center justify-center bg-[#d2d2d2]"><ConfigIcon /></button>
        <button aria-label="DimXpertManager" className="flex w-[43px] items-center justify-center bg-[#d2d2d2]"><TargetIcon /></button>
        <button aria-label="DisplayManager" className="flex w-[44px] items-center justify-center bg-[#d2d2d2]"><SphereIcon mode="dark" /></button>
        <button aria-label="More tabs" className="ml-auto pr-[2px] text-[#333]"><ChevronRight size={18} /></button>
      </div>
      <button aria-label="Filter" className="flex h-8 items-center pl-[5px]">
        <Ico size={20}>
          <path d="M2 7l10 11v9l5 2V18L28 7z" fill="#eee" stroke="#777" strokeWidth="1.5" />
          <path d="M1 2h28v5H1z" fill="#3f92bb" />
        </Ico>
      </button>
      <ul className="flex h-[492px] flex-col text-[15px]">
        <li className="relative flex flex-1 items-center gap-[2px] pl-[3px] whitespace-nowrap">
          <PartIcon size={18} />
          <span>Model 8-4 (Default) &lt; &lt;Default&gt; D</span>
          <Callout className="top-5 left-[127px]" />
        </li>
        {treeItems.map((item) => (
          <li key={item.label} className="flex flex-1 items-center gap-[2px] whitespace-nowrap">
            <span className="flex w-[22px] items-center pl-[9px]">
              {item.open && (
                <button aria-label={`Expand ${item.label}`}>
                  <svg width="4" height="6" viewBox="0 0 4 6"><path d="M0 0l4 3-4 3z" fill="#555" /></svg>
                </button>
              )}
            </span>
            {item.icon}
            <span>{item.label}</span>
          </li>
        ))}
      </ul>
      <div className="h-[5px] border-b-2 border-[#1f4fb4] bg-[#2f86c4]" />
      <div className="mt-auto mb-[3px] flex h-[20px] items-center justify-between bg-[#efefef] px-[2px] text-[#444]">
        <button aria-label="Scroll left"><ChevronLeft size={18} /></button>
        <span className="mr-auto ml-[2px] h-5 w-[156px] bg-[#cbcbcb]" />
        <button aria-label="Scroll right"><ChevronRight size={18} /></button>
      </div>
    </aside>
  )
}

function Bracket() {
  return (
    <svg width="512" height="622" viewBox="605 272 512 622" className="absolute top-[72px] left-[333px]" role="img" aria-label="Sheet metal bracket">
      <defs>
        <linearGradient id="bend" gradientUnits="userSpaceOnUse" x1="900" y1="461" x2="896" y2="480">
          <stop offset="0" stopColor="#d8cdc4" />
          <stop offset=".2" stopColor="#e6dad1" />
          <stop offset=".45" stopColor="#fbf0e8" />
          <stop offset=".65" stopColor="#b5aba4" />
          <stop offset="1" stopColor="#77716d" />
        </linearGradient>
        <linearGradient id="side" gradientUnits="userSpaceOnUse" x1="1028" y1="650" x2="1046" y2="652">
          <stop offset="0" stopColor="#d8cdc4" />
          <stop offset=".3" stopColor="#d0c6be" />
          <stop offset=".6" stopColor="#88807a" />
          <stop offset="1" stopColor="#1f1e1d" />
        </linearGradient>
        <linearGradient id="edge" gradientUnits="userSpaceOnUse" x1="784" y1="846" x2="782" y2="856">
          <stop offset="0" stopColor="#77716d" />
          <stop offset="1" stopColor="#111" />
        </linearGradient>
        <linearGradient id="rim" gradientUnits="userSpaceOnUse" x1="1088" y1="415" x2="1103" y2="418">
          <stop offset="0" stopColor="#d8cdc4" />
          <stop offset=".6" stopColor="#e9ddd5" />
          <stop offset="1" stopColor="#cbc0b8" />
        </linearGradient>
      </defs>
      <path d="M872 276l-8 38" stroke="#6d6863" strokeWidth="2" strokeDasharray="12 1" />
      <path d="M1114 334L1091 502" stroke="#5a5551" strokeWidth="2" strokeDasharray="7 4" />
      <path d="M1116 322v10" stroke="#5a5551" strokeDasharray="2 3" />
      <path d="M872 276l232 48q9 2 10 10l-23 168-14 5-231-48z" fill="#d8cdc4" />
      <path d="M1104 324q9 2 10 10l-23 168-14-2z" fill="url(#rim)" />
      <path d="M846 460l231 48-8 37-231-48z" fill="#77716d" />
      <path d="M848 450l231 48-4 21-231-48z" fill="url(#bend)" />
      <ellipse cx="987" cy="343" rx="19" ry="7" transform="rotate(8 987 343)" fill="#fff" />
      <path d="M969 339c5-7 31-4 37 5-10-4-20-5-37-5z" fill="#77716d" />
      <ellipse cx="978" cy="434" rx="19" ry="7" transform="rotate(8 978 434)" fill="#fff" />
      <path d="M644 563l391 81-29 214-39-8-357-32z" fill="#d8cdc4" />
      <path d="M1079 497q8-1 11 6l-4 50-25 99-43 200q-3 6-12 6l40-216 6-23 17-75z" fill="#1f1e1d" />
      <path d="M1024 642l11 2q12 2 17-25l9 33-43 198q-3 8-12 8l-20-4z" fill="url(#side)" />
      <path d="M631 717l348 72-22 102-349-72z" fill="#77716d" />
      <path d="M610 810l349 72-2 9-349-72z" fill="url(#edge)" />
    </svg>
  )
}

function Triad() {
  return (
    <svg width="64" height="76" viewBox="0 0 64 76" className="absolute bottom-[37px] left-[39px]" aria-label="Orientation triad">
      <path d="M12 52l6-28" stroke="#0a6b13" strokeWidth="5" />
      <path d="M18 14l6 13-14-3z" fill="#0a6b13" />
      <path d="M14 51l26 6" stroke="#c81414" strokeWidth="5" />
      <path d="M36 50l13 8-14 6z" fill="#b11010" />
      <path d="M12 50v9" stroke="#1616c8" strokeWidth="6" />
      <circle cx="10" cy="62" r="6" fill="#0c0ca8" />
      <path d="M6 69h9" stroke="#1616c8" strokeWidth="2" />
      <text x="19" y="9" fontSize="10" fill="#2fa33a">Y</text>
      <text x="56" y="62" fontSize="11" fill="#ee2222">X</text>
    </svg>
  )
}

function TaskStrip() {
  return (
    <nav className="mt-[53px] flex w-[52px] flex-col self-start border-l-2 border-[#8d8d8d]">
      {paneTabs.map((tab, i) => {
        const isActive = i === paneTabs.length - 1
        return (
          <button
            key={tab.label}
            aria-label={tab.label}
            className={`relative flex h-[46px] items-center justify-center ${
              isActive ? 'bg-[#f8f8f8]' : 'bg-[#d4d4d4]'
            } ${i < 3 ? 'border-b border-[#9d9d9d]' : ''}`}
          >
            {tab.icon}
            {isActive && <Callout className="top-[38px] -left-[38px] -scale-x-100 -rotate-6" />}
          </button>
        )
      })}
    </nav>
  )
}

function ExperiencePanel() {
  const [tab, setTab] = useState('Lifecycle')
  return (
    <aside className="flex w-[455px] flex-col bg-white">
      <div className="flex h-[27px] items-center border-b-2 border-[#4a4b4d] bg-[#a9abad] px-[6px]">
        <button aria-label="Collapse pane"><ChevronsLeft size={18} /></button>
        <h2 className="flex-1 pl-[10px] text-center text-[15px] leading-5 font-bold">3DEXPERIENCE</h2>
        <button aria-label="Settings"><GearIcon size={18} /></button>
        <button aria-label="Pin" className="ml-1"><Pin size={16} className="rotate-90 fill-black" /></button>
      </div>
      <div className="flex flex-1 flex-col border-l-[6px] border-[#f5f5f5]">
        <div className="flex h-[56px] items-center bg-[#2a5383] pr-[14px] pl-[7px] text-white">
          <CompassIcon size={42} />
          <span className="ml-[18px] flex-1 text-[21px] font-light whitespace-nowrap">MySession - Quic...</span>
          <button aria-label="Sessions" className="mr-4"><ChevronDown size={22} strokeWidth={3} /></button>
          <button aria-label="Search" className="mr-7"><Search size={28} strokeWidth={3} /></button>
          <button aria-label="Tags" className="mr-7"><Tag size={28} strokeWidth={2} /></button>
          <button aria-label="Menu"><Menu size={30} strokeWidth={3} /></button>
        </div>
        <table className="w-full table-fixed font-['Liberation_Sans',Arial,sans-serif] text-[#333]">
          <thead>
            <tr className="h-11 bg-[#f0f0f0] text-left text-[18px]">
              <th className="pl-[9px] font-normal">Component Name</th>
              <th className="w-[110px] text-center font-normal">Status</th>
              <th className="w-[102px] pl-[47px] font-normal">Rev</th>
            </tr>
          </thead>
          <tbody>
            <tr className="h-8 border-b border-[#f2f2f2] text-[17px] text-black">
              <td className="pl-[51px]">
                <div className="relative flex items-center gap-[13px]">
                  <SeatIcon />
                  Model 8-4
                  <Callout className="top-[22px] left-[77px]" />
                </div>
              </td>
              <td>
                <div className="relative flex justify-center pl-4">
                  <SaveStateIcon />
                  <Callout className="top-6 left-[76px]" />
                </div>
              </td>
              <td />
            </tr>
          </tbody>
        </table>
        <button aria-label="Assistant" className="mt-auto mb-[43px] ml-2 flex h-[57px] w-[57px] items-center justify-center rounded-full border border-dashed border-[#bbb] bg-white shadow-md">
          <svg width="40" height="26" viewBox="0 0 40 26" fill="none">
            <path d="M2 20C2 8 8 2 17 2s15 6 17 16l5 3H8z" fill="#e6e6e6" stroke="#444" strokeWidth="2" />
            <path d="M2 18v5h9l4-3" stroke="#444" strokeWidth="2" />
            <path d="M9 11h3M14 11h3M19 11h3" stroke="#444" strokeWidth="2" />
          </svg>
        </button>
        <div className="flex h-[29px] items-stretch font-['Liberation_Sans',Arial,sans-serif] text-[15px] text-[#333]">
          <button aria-label="Previous tabs" className="flex w-8 items-center justify-center text-[#ddd]"><ChevronLeft size={26} strokeWidth={4} /></button>
          <div className="flex flex-1 overflow-hidden border-t-2 border-l border-[#999] bg-[#e0e3e1] pt-[2px]" role="tablist">
            {['Lifecycle', 'Collaboration', 'Simulation', 'View'].map((name) => (
              <button
                key={name}
                role="tab"
                aria-selected={tab === name}
                onClick={() => setTab(name)}
                className={`px-[13px] last:ml-4 last:pr-0 ${tab === name ? 'bg-[#aac7de]' : ''}`}
              >
                {name}
              </button>
            ))}
          </div>
          <button aria-label="Next tabs" className="flex w-[28px] items-center justify-center text-[#bbb]"><ChevronRight size={26} strokeWidth={3} /></button>
          <button aria-label="Collapse tabs" className="flex w-[32px] items-center justify-center text-[#bbb]"><ChevronDown size={28} strokeWidth={3} /></button>
        </div>
        <div className="flex h-[65px] border-y-2 border-[#999] bg-[#f0f0f0]">
          <button aria-label="Scroll left" className="flex w-[44px] items-center justify-center border-r-2 border-[#888]">
            <svg width="26" height="38" viewBox="0 0 26 38"><path d="M19 2l5 5-12 12 12 12-5 5L2 19z" fill="#fff" stroke="#bbb" strokeWidth="1.5" /></svg>
          </button>
          <div className="flex w-[72px] items-center justify-between border-r-2 border-[#888] bg-white pt-1 pr-3 pl-[10px]">
            <button aria-label="Save Active Window"><SaveActiveIcon /></button>
            <button aria-label="Save options"><Caret className="text-black" /></button>
          </div>
          <div className="flex flex-1 items-center justify-between bg-[#e0e3e1] pt-1 pr-4 pl-2">
            <button aria-label="Reload"><ReloadIcon /></button>
            <div className="flex items-center gap-1">
              <button aria-label="Explore"><ExploreIcon /></button>
              <button aria-label="Explore options"><Caret className="text-black" /></button>
            </div>
            <button aria-label="Update"><UpdateIcon /></button>
            <button aria-label="Structure"><StructureIcon /></button>
            <button aria-label="Add Branch"><AddBranchIcon /></button>
          </div>
          <button aria-label="Scroll right" className="flex w-[42px] items-center justify-center border-l-2 border-[#888]">
            <svg width="26" height="38" viewBox="0 0 26 38"><path d="M7 2L2 7l12 12L2 31l5 5 17-17z" fill="#fff" stroke="#bbb" strokeWidth="1.5" /></svg>
          </button>
        </div>
        <div className="h-[7px] pr-1 text-right text-[7px] leading-[7px] text-[#333]">Etc2-</div>
      </div>
    </aside>
  )
}

export default function App() {
  return (
    <div className="flex min-h-screen flex-col bg-white pt-[6px] pr-px pb-[10px] pl-[6px] font-['Open_Sans','Noto_Sans',sans-serif] text-black">
      <div className="flex flex-1 flex-col border-4 border-black">
        <TitleBar />
        <Ribbon />
        <div className="flex flex-1">
          <div className="flex min-w-0 flex-1 flex-col">
            <div className="flex h-[29px] items-center">
              <div className="flex h-full text-[15px] text-[#222]" role="tablist">
                {commandTabs.map((tab, i) => (
                  <button
                    key={tab.label}
                    role="tab"
                    aria-selected={i === 0}
                    className={`whitespace-nowrap ${tab.width} ${i === 0 ? 'bg-[#f6f6f6] font-semibold' : 'bg-[#d4d4d4]'} ${
                      tab.line ? 'border-r border-[#8f8f8f]' : ''
                    }`}
                  >
                    {tab.label}
                  </button>
                ))}
              </div>
              <div className="flex items-center pt-2 pl-[118px]">
                {viewTools.map((tool) => (
                  <div key={tool.label} className="flex items-center">
                    <button aria-label={tool.label} className="flex w-9 justify-center">{tool.icon}</button>
                    {tool.caret && <button aria-label={`${tool.label} options`} className="flex w-[10px] justify-center"><Caret className="text-[#aaa]" /></button>}
                  </div>
                ))}
              </div>
            </div>
            <div className="flex flex-1">
              <FeaturePanel />
              <main className="relative flex-1">
                <button aria-label="Collapse panel" className="absolute top-[372px] -left-[2px] flex h-[50px] w-[14px] items-center justify-center border-r-2 border-[#bbb] bg-[#f6f6f6]">
                  <Caret className="text-[#bbb]" />
                </button>
                <Bracket />
                <Triad />
              </main>
              <TaskStrip />
            </div>
            <footer className="flex h-[30px] items-start bg-[#f6f6f6]">
              <div className="ml-[13px] flex h-3 w-[50px] items-center justify-around bg-[#a9adc4] text-[#7f84a0]">
                <ChevronLeft size={10} />
                <ChevronLeft size={10} />
                <ChevronRight size={10} />
                <ChevronRight size={10} />
              </div>
              <button className="h-[23px] w-[67px] pl-1 text-base leading-[23px] font-bold">Model</button>
              <button className="h-[23px] w-[141px] bg-[#d4d4d4] pr-2 text-base leading-[23px] text-[#222]">Motion Study 1</button>
            </footer>
          </div>
          <ExperiencePanel />
        </div>
      </div>
    </div>
  )
}
